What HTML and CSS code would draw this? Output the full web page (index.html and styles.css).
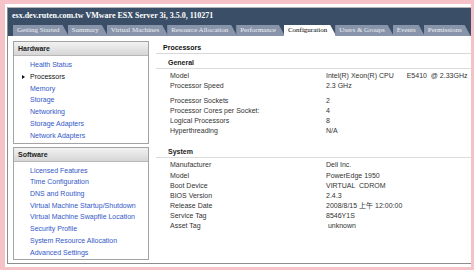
FILE: index.html
```
<!DOCTYPE html>
<html lang="en">
<head>
    <meta charset="UTF-8">
    <title>VMware Infrastructure Client - Configuration</title>
    <link rel="stylesheet" href="styles.css">
</head>
<body>
    <div class="screen">
        <div class="frame">
            <div class="window">
                <div class="header">
                    <div class="title">esx.dev.ruten.com.tw VMware ESX Server 3i, 3.5.0, 110271</div>
                    <div class="tabs">
                        <span class="tab">Getting Started</span>
                        <span class="tab">Summary</span>
                        <span class="tab">Virtual Machines</span>
                        <span class="tab">Resource Allocation</span>
                        <span class="tab">Performance</span>
                        <span class="tab active">Configuration</span>
                        <span class="tab">Users &amp; Groups</span>
                        <span class="tab">Events</span>
                        <span class="tab">Permissions</span>
                    </div>
                </div>

                <div class="content">
                    <div class="sidebar">
                        <div class="box">
                            <div class="box-head">Hardware</div>
                            <ul class="links">
                                <li>Health Status</li>
                                <li class="current">Processors</li>
                                <li>Memory</li>
                                <li>Storage</li>
                                <li>Networking</li>
                                <li>Storage Adapters</li>
                                <li>Network Adapters</li>
                            </ul>
                        </div>
                        <div class="box software">
                            <div class="box-head">Software</div>
                            <ul class="links">
                                <li>Licensed Features</li>
                                <li>Time Configuration</li>
                                <li>DNS and Routing</li>
                                <li>Virtual Machine Startup/Shutdown</li>
                                <li>Virtual Machine Swapfile Location</li>
                                <li>Security Profile</li>
                                <li>System Resource Allocation</li>
                                <li>Advanced Settings</li>
                            </ul>
                        </div>
                    </div>

                    <div class="main">
                        <div class="page-head">Processors</div>

                        <div class="section-head">General</div>
                        <div class="rows">
                            <div class="row"><span class="label">Model</span><span class="value">Intel(R) Xeon(R) CPU<span class="model-tail">E5410  @ 2.33GHz</span></span></div>
                            <div class="row"><span class="label">Processor Speed</span><span class="value">2.3 GHz</span></div>
                        </div>
                        <div class="rows spaced">
                            <div class="row"><span class="label">Processor Sockets</span><span class="value">2</span></div>
                            <div class="row"><span class="label">Processor Cores per Socket:</span><span class="value">4</span></div>
                            <div class="row"><span class="label">Logical Processors</span><span class="value">8</span></div>
                            <div class="row"><span class="label">Hyperthreading</span><span class="value">N/A</span></div>
                        </div>

                        <div class="section-head system">System</div>
                        <div class="rows tight">
                            <div class="row"><span class="label">Manufacturer</span><span class="value">Dell Inc.</span></div>
                            <div class="row"><span class="label">Model</span><span class="value">PowerEdge 1950</span></div>
                            <div class="row"><span class="label">Boot Device</span><span class="value">VIRTUAL  CDROM</span></div>
                            <div class="row"><span class="label">BIOS Version</span><span class="value">2.4.3</span></div>
                            <div class="row"><span class="label">Release Date</span><span class="value">2008/8/15 上午 12:00:00</span></div>
                            <div class="row"><span class="label">Service Tag</span><span class="value">8546Y1S</span></div>
                            <div class="row"><span class="label">Asset Tag</span><span class="value"> unknown</span></div>
                        </div>
                    </div>
                </div>
            </div>
        </div>
    </div>
</body>
</html>
```

FILE: styles.css
```
body {
    margin: 0;
    background: #f5c3c7;
    font-family: "Liberation Sans", Arial, "Noto Sans CJK TC", sans-serif;
    font-size: 7px;
    color: #333;
}
.screen {
    width: 474px;
    height: 270px;
    box-sizing: border-box;
    padding: 4px 3px 3px 5px;
    overflow: hidden;
}
.frame {
    background: #fff;
    height: 263px;
    box-sizing: border-box;
    padding: 3px 0 0 2px;
}
.window {
    height: 257px;
    box-sizing: border-box;
    border-top: 1px solid #b4b4b4;
    border-left: 1px solid #8e8e8e;
    border-bottom: 1px solid #8e8e8e;
}
.header {
    background: #3a4f67;
    height: 28px;
}
.title {
    height: 16px;
    line-height: 16px;
    padding-left: 4px;
    color: #fff;
    font-family: "Liberation Serif", "Times New Roman", serif;
    font-weight: bold;
    font-size: 8px;
    white-space: nowrap;
}
.tabs {
    display: flex;
    padding: 1px 0 0 5px;
    height: 11px;
}
.tab {
    background: #8794aa;
    color: #eef0f4;
    font-family: "Liberation Serif", "Times New Roman", serif;
    font-size: 7px;
    line-height: 11px;
    padding: 0 9px 0 4px;
    margin-right: -1px;
    white-space: nowrap;
    clip-path: polygon(0 0, calc(100% - 6px) 0, 100% 100%, 0 100%);
}
.tab.active {
    background: #fff;
    color: #000;
}
.content {
    display: flex;
}
.sidebar {
    width: 143px;
    padding: 5px 0 0 5px;
    flex: none;
}
.box {
    width: 136px;
    box-sizing: border-box;
    border: 1px solid #a3a3a3;
}
.box.software {
    margin-top: 3px;
}
.box-head {
    height: 13px;
    line-height: 13px;
    padding-left: 4px;
    background: linear-gradient(#f2f2f2, #d6d6d6);
    border-bottom: 1px solid #b8b8b8;
    font-weight: bold;
    color: #222;
}
.links {
    list-style: none;
    margin: 0;
    padding: 3px 0 1px 16px;
}
.links li {
    line-height: 11.8px;
    color: #3358c8;
    white-space: nowrap;
    position: relative;
}
.software .links li {
    line-height: 11.7px;
}
.links li.current {
    color: #111;
}
.links li.current::before {
    content: "";
    position: absolute;
    left: -8px;
    top: 4px;
    border-left: 3px solid #111;
    border-top: 2px solid transparent;
    border-bottom: 2px solid transparent;
}
.main {
    flex: 1;
    padding-top: 7px;
}
.page-head {
    line-height: 10px;
    padding-left: 7px;
    font-weight: bold;
    color: #111;
    border-bottom: 1px solid #d8d8d8;
}
.section-head {
    margin-top: 4px;
    line-height: 10px;
    padding-left: 12px;
    font-weight: bold;
    color: #222;
    border-bottom: 1px solid #dcdcdc;
}
.section-head.system {
    margin-top: 12px;
}
.rows {
    padding-top: 2px;
}
.rows.spaced {
    padding-top: 5px;
}
.row {
    display: flex;
    line-height: 9.9px;
    padding-left: 14px;
    white-space: pre;
}
.rows.tight .row {
    line-height: 10.1px;
}
.label {
    width: 156px;
    flex: none;
}
.model-tail {
    margin-left: 13px;
}
```
